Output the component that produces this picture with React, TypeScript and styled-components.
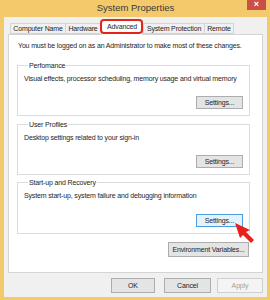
import React from "react";
import styled, { createGlobalStyle } from "styled-components";

const GlobalStyle = createGlobalStyle`
  html, body {
    margin: 0;
    padding: 0;
    background: #f3c96b;
  }
  * {
    box-sizing: border-box;
  }
`;

const Window = styled.div`
  position: relative;
  width: 270px;
  height: 300px;
  display: flex;
  flex-direction: column;
  background: #f3c96b;
  border-left: 4px solid #f3c96b;
  border-right: 3px solid #f3c96b;
  border-bottom: 3px solid #f3c96b;
  font-family: "Liberation Sans", Arial, sans-serif;
  color: #1e1e1e;
`;

const TitleBar = styled.div`
  height: 17px;
  display: grid;
  grid-template-columns: 1fr auto 1fr;
  align-items: start;
`;

const Title = styled.div`
  grid-column: 2;
  font-size: 9.5px;
  line-height: 15px;
  color: #3a3a3a;
`;

const CloseButton = styled.div`
  grid-column: 3;
  justify-self: end;
  width: 19px;
  height: 10px;
  margin-right: 1px;
  background: #c94f47;
  color: #fff;
  font-size: 9px;
  line-height: 9px;
  text-align: center;
  font-weight: bold;
`;

const Client = styled.div`
  flex: 1;
  display: flex;
  flex-direction: column;
  background: #f0f0f0;
  padding: 3px 4px 3px 4px;
`;

const TabStrip = styled.div`
  display: flex;
  align-items: flex-end;
  height: 14px;
  padding-left: 2px;
  position: relative;
  z-index: 1;
`;

const Tab = styled.div<{ $w: number; $active?: boolean }>`
  width: ${(p) => p.$w}px;
  height: ${(p) => (p.$active ? 15 : 11)}px;
  margin-bottom: ${(p) => (p.$active ? -1 : 0)}px;
  margin-left: ${(p) => (p.$active ? 1 : 0)}px;
  background: ${(p) => (p.$active ? "#ffffff" : "#f0f0f0")};
  border: 1px solid #d4d4d4;
  border-bottom: ${(p) => (p.$active ? "none" : "1px solid #d4d4d4")};
  border-right: ${(p) => (p.$active ? "1px solid #d4d4d4" : "none")};
  font-size: 7px;
  line-height: ${(p) => (p.$active ? 12 : 10)}px;
  text-align: center;
  white-space: nowrap;
  letter-spacing: -0.15px;
  &:last-child {
    border-right: 1px solid #d4d4d4;
  }
`;

const Highlight = styled.div`
  position: absolute;
  left: 96px;
  top: 19px;
  width: 43px;
  height: 15px;
  border: 2px solid #e3241b;
  border-radius: 4px;
  pointer-events: none;
  z-index: 3;
`;

const Panel = styled.div`
  height: 239px;
  background: #ffffff;
  border: 1px solid #d4d4d4;
  display: flex;
  flex-direction: column;
  padding: 6px 12px 0 8px;
`;

const Note = styled.div`
  font-size: 7px;
  line-height: 9px;
  padding-left: 1px;
  white-space: nowrap;
  letter-spacing: -0.15px;
`;

const Group = styled.div<{ $h: number; $mt: number }>`
  height: ${(p) => p.$h}px;
  margin-top: ${(p) => p.$mt}px;
  padding: 0 6px 6px 6px;
  border: 1px solid #dcdcdc;
  display: flex;
  flex-direction: column;
`;

const Legend = styled.span`
  align-self: flex-start;
  margin: -5px 0 0 4px;
  padding: 0 1px;
  background: #ffffff;
  font-size: 7px;
  line-height: 9px;
  letter-spacing: -0.15px;
`;

const Description = styled.div`
  font-size: 7px;
  line-height: 9px;
  margin-top: 4px;
  white-space: nowrap;
  letter-spacing: -0.15px;
`;

const Button = styled.div<{
  $w: number;
  $h?: number;
  $mr?: number;
  $focus?: boolean;
  $disabled?: boolean;
}>`
  width: ${(p) => p.$w}px;
  height: ${(p) => p.$h ?? 13}px;
  margin-right: ${(p) => p.$mr ?? 0}px;
  background: ${(p) => (p.$focus ? "#e5f1fb" : p.$disabled ? "#f4f4f4" : "#e4e4e4")};
  border: 1px solid ${(p) => (p.$focus ? "#4c9ee0" : p.$disabled ? "#d0d0d0" : "#adadad")};
  color: ${(p) => (p.$disabled ? "#a3a3a3" : "#1e1e1e")};
  font-size: 7px;
  line-height: ${(p) => (p.$h ?? 13) - 2}px;
  text-align: center;
  white-space: nowrap;
  letter-spacing: -0.15px;
`;

const ButtonRow = styled.div<{ $mt: number; $pr?: number }>`
  display: flex;
  justify-content: flex-end;
  gap: 6px;
  margin-top: ${(p) => p.$mt}px;
  padding-right: ${(p) => p.$pr ?? 0}px;
`;

const Spacer = styled.div`
  flex: 1;
`;

const Cursor = styled.svg`
  position: absolute;
  left: 229px;
  top: 221px;
  z-index: 4;
`;

const tabs = [
  { label: "Computer Name", w: 55 },
  { label: "Hardware", w: 35 },
  { label: "Advanced", w: 42, active: true },
  { label: "System Protection", w: 61 },
  { label: "Remote", w: 30 },
];

const groups = [
  {
    title: "Perfomance",
    text: "Visual effects, processor scheduling, memory usage and virtual memory",
    h: 51,
    mt: 15,
  },
  {
    title: "User Profiles",
    text: "Desktop settings related to your sign-in",
    h: 51,
    mt: 8,
  },
  {
    title: "Start-up and Recovery",
    text: "System start-up, system failure and debugging information",
    h: 52,
    mt: 7,
    focus: true,
  },
];

const App = () => {
  return (
    <>
      <GlobalStyle />
      <Window>
        <TitleBar>
          <Title>System Properties</Title>
          <CloseButton>×</CloseButton>
        </TitleBar>
        <Client>
          <TabStrip>
            {tabs.map((t) => (
              <Tab key={t.label} $w={t.w} $active={t.active}>
                {t.label}
              </Tab>
            ))}
          </TabStrip>
          <Panel>
            <Note>You must be logged on as an Administrator to make most of these changes.</Note>
            {groups.map((g) => (
              <Group key={g.title} $h={g.h} $mt={g.mt}>
                <Legend>{g.title}</Legend>
                <Description>{g.text}</Description>
                <Spacer />
                <ButtonRow $mt={0}>
                  <Button $w={47} $focus={g.focus}>
                    Settings...
                  </Button>
                </ButtonRow>
              </Group>
            ))}
            <ButtonRow $mt={8} $pr={1}>
              <Button $w={81} $h={15}>
                Environment Variables...
              </Button>
            </ButtonRow>
          </Panel>
          <ButtonRow $mt={5} $pr={0}>
            <Button $w={44} $h={15} $mr={3}>
              OK
            </Button>
            <Button $w={47} $h={15}>
              Cancel
            </Button>
            <Button $w={46} $h={15} $disabled>
              Apply
            </Button>
          </ButtonRow>
        </Client>
        <Highlight />
        <Cursor width="24" height="24" viewBox="0 0 24 24">
          <polygon
            points="2,2 17,9 13,11 21,19 18,22 10,14 7,17"
            fill="#e8221a"
          />
        </Cursor>
      </Window>
    </>
  );
};

export default App;
